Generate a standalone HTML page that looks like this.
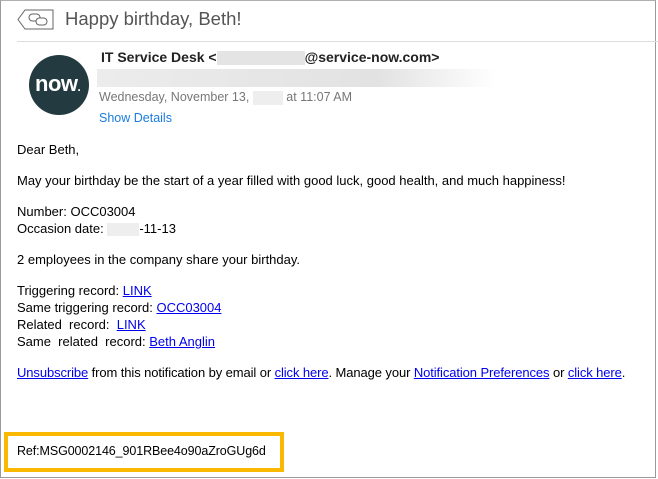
<!DOCTYPE html>
<html><head><style>
body{margin:0;width:658px;height:479px;overflow:hidden;background:#fff;font-family:"Liberation Sans",Arial,sans-serif;}
.frame{position:absolute;left:0;top:0;width:654px;height:476px;border:1px solid #9a9a9a;border-top:1px solid #b0b0b0;}
.abs{position:absolute;white-space:nowrap;}
.t{font-size:13px;color:#000;}
a{color:#0000ee;text-decoration:underline;}
.blur{display:inline-block;background:#e4e4e4;vertical-align:middle;}
</style></head><body>
<div class="frame"></div>
<svg class="abs" style="left:17px;top:9px" width="38" height="21" viewBox="0 0 38 21">
<path d="M8 1 H36 V20 H8 L1 10.5 Z" fill="none" stroke="#666" stroke-width="1"/>
<rect x="12" y="5" width="11" height="7" rx="3.5" fill="none" stroke="#666"/>
<rect x="19" y="9" width="11" height="7" rx="3.5" fill="#fff" stroke="#666"/>
</svg>
<div class="abs" style="left:65px;top:8px;font-size:18.5px;color:#555;">Happy birthday, Beth!</div>
<div class="abs" style="left:17px;top:41px;width:641px;height:1px;background:#ddd"></div>
<div class="abs" style="left:29px;top:55px;width:60px;height:60px;border-radius:50%;background:#243a41;"></div>
<div class="abs" style="left:35px;top:71px;font-size:22px;font-weight:bold;color:#fff;letter-spacing:-0.5px">now<span style="font-size:12px">.</span></div>
<div class="abs" style="left:101px;top:49px;font-size:14px;font-weight:bold;color:#222">IT Service Desk &lt;<span class="blur" style="width:88px;height:14px"></span>@service-now.com&gt;</div>
<div class="abs" style="left:97px;top:69px;width:400px;height:18px;background:linear-gradient(90deg,#ececec,#e2e2e2 70%,#fff)"></div>
<div class="abs" style="left:99px;top:90px;font-size:12.5px;color:#777">Wednesday, November 13, <span class="blur" style="width:30px;height:14px;background:#eee"></span> at 11:07 AM</div>
<div class="abs" style="left:99px;top:111px;font-size:12.5px;color:#1a7de0">Show Details</div>
<div class="abs t" style="left:17px;top:142px">Dear Beth,</div>
<div class="abs t" style="left:17px;top:173px">May your birthday be the start of a year filled with good luck, good health, and much happiness!</div>
<div class="abs t" style="left:17px;top:204px">Number: OCC03004</div>
<div class="abs t" style="left:17px;top:221px">Occasion date: <span class="blur" style="width:32px;height:13px;background:#eee"></span>-11-13</div>
<div class="abs t" style="left:17px;top:252px">2 employees in the company share your birthday.</div>
<div class="abs t" style="left:17px;top:283px">Triggering record: <a>LINK</a></div>
<div class="abs t" style="left:17px;top:300px">Same triggering record: <a>OCC03004</a></div>
<div class="abs t" style="left:17px;top:317px">Related&nbsp; record:&nbsp; <a>LINK</a></div>
<div class="abs t" style="left:17px;top:334px">Same&nbsp; related&nbsp; record: <a>Beth Anglin</a></div>
<div class="abs t" style="left:17px;top:365px;letter-spacing:-0.1px"><a>Unsubscribe</a> from this notification by email or <a>click here</a>. Manage your <a>Notification Preferences</a> or <a>click here</a>.</div>
<div class="abs" style="left:4px;top:432px;width:272px;height:32px;border:4px solid #fbb800;"></div>
<div class="abs" style="left:17px;top:444px;font-size:12.5px;letter-spacing:-0.1px">Ref:MSG0002146_901RBee4o90aZroGUg6d</div>
</body></html>
